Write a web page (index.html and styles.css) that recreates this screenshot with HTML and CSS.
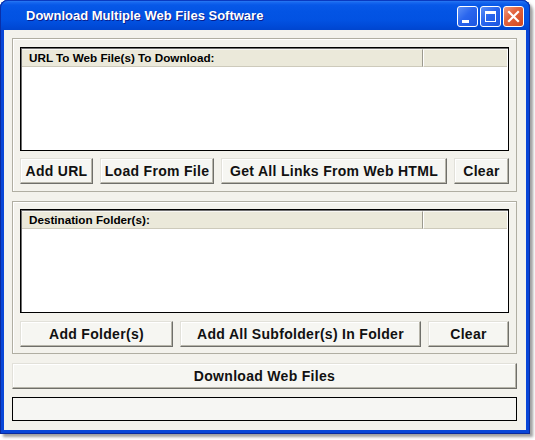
FILE: index.html
```html
<!DOCTYPE html>
<html>
<head>
<meta charset="utf-8">
<link rel="stylesheet" href="styles.css">
</head>
<body>
<div class="window">
  <div class="titlebar">
    <div class="title">Download Multiple Web Files Software</div>
    <div class="caps">
      <div class="cap cap-min"><span class="min-bar"></span></div>
      <div class="cap cap-max"><span class="max-box"></span></div>
      <div class="cap cap-close">
        <svg width="13" height="13" viewBox="0 0 13 13"><path d="M2 2 L11 11 M11 2 L2 11" stroke="#fff" stroke-width="2.2" stroke-linecap="square"/></svg>
      </div>
    </div>
  </div>
  <div class="client">
    <div class="group g1">
      <div class="list">
        <div class="lhead">
          <div class="hcell hfirst">URL To Web File(s) To Download:</div>
          <div class="hcell hrest"></div>
        </div>
        <div class="lbody"></div>
      </div>
      <div class="btnrow">
        <button class="btn w-addurl">Add URL</button>
        <button class="btn w-load">Load From File</button>
        <button class="btn w-links">Get All Links From Web HTML</button>
        <button class="btn w-clear1">Clear</button>
      </div>
    </div>
    <div class="group g2">
      <div class="list">
        <div class="lhead">
          <div class="hcell hfirst">Destination Folder(s):</div>
          <div class="hcell hrest"></div>
        </div>
        <div class="lbody"></div>
      </div>
      <div class="btnrow">
        <button class="btn w-addf">Add Folder(s)</button>
        <button class="btn w-addall">Add All Subfolder(s) In Folder</button>
        <button class="btn w-clear2">Clear</button>
      </div>
    </div>
    <button class="btn download">Download Web Files</button>
    <div class="status"></div>
  </div>
</div>
</body>
</html>
```
FILE: styles.css
```css
html, body {
  margin: 0;
  padding: 0;
  background: #ffffff;
}
body {
  width: 535px;
  height: 440px;
  overflow: hidden;
  font-family: "Liberation Sans", Arial, sans-serif;
}
.window {
  width: 530px;
  height: 434px;
  box-sizing: border-box;
  display: flex;
  flex-direction: column;
  background: #0846D8;
  border-radius: 8px 8px 0 0;
  box-shadow: inset 0 0 0 1px #0A2A9E, 3px 3px 3px rgba(0, 0, 0, 0.38);
}
.titlebar {
  height: 30px;
  flex: none;
  display: flex;
  align-items: center;
  padding: 0 6px 0 26px;
  box-sizing: border-box;
  border-radius: 8px 8px 0 0;
  background: linear-gradient(to bottom, #3C8EF8 0px, #1A6AF0 2px, #0758E8 5px, #0354E4 12px, #0252E2 20px, #0049D6 27px, #0045CE 30px);
  box-shadow: inset 1px 0 #0A2FA8, inset -1px 0 #0A2FA8, inset 0 1px #0A3AC0;
}
.title {
  flex: 1;
  color: #ffffff;
  font-weight: bold;
  font-size: 13px;
  text-shadow: 1px 1px 0 #0A1E8C;
  padding-top: 1px;
}
.caps {
  display: flex;
  gap: 2px;
  padding-top: 2px;
}
.cap {
  width: 21px;
  height: 21px;
  box-sizing: border-box;
  border: 1px solid #ffffff;
  border-radius: 3px;
  position: relative;
}
.cap-min, .cap-max {
  background: linear-gradient(135deg, #5C8FF6 0%, #2A66EE 45%, #1C55E0 100%);
}
.cap-close {
  background: linear-gradient(135deg, #F09A80 0%, #E2643F 40%, #D2461E 100%);
  display: flex;
  align-items: center;
  justify-content: center;
}
.min-bar {
  position: absolute;
  left: 4px;
  top: 13px;
  width: 7px;
  height: 3px;
  background: #ffffff;
}
.max-box {
  position: absolute;
  left: 4px;
  top: 4px;
  width: 11px;
  height: 11px;
  box-sizing: border-box;
  border: 1px solid #ffffff;
  border-top-width: 3px;
}
.client {
  flex: 1;
  margin: 0 4px 4px 4px;
  background: #F3F2EC;
  padding: 8px 9px 0 8px;
  box-sizing: border-box;
  display: flex;
  flex-direction: column;
}
.group {
  box-sizing: border-box;
  border: 1px solid #B0AEA2;
  box-shadow: inset 1px 1px #ffffff;
  display: flex;
  flex-direction: column;
}
.g1 {
  height: 154px;
  padding: 8px 7px 7px 7px;
  gap: 7px;
}
.g2 {
  height: 153px;
  margin-top: 9px;
  padding: 7px 7px 6px 7px;
  gap: 8px;
}
.list {
  height: 104px;
  box-sizing: border-box;
  border: 1px solid #000000;
  box-shadow: inset 1px 1px #6E6E6E;
  background: #ffffff;
  display: flex;
  flex-direction: column;
  padding: 1px 0 0 1px;
}
.lhead {
  height: 18px;
  display: flex;
  flex: none;
}
.hcell {
  box-sizing: border-box;
  height: 18px;
  background: #EBE9DA;
  border-top: 1px solid #F8F7F2;
  border-bottom: 1px solid #CDCABB;
  font-size: 11.7px;
  font-weight: bold;
  color: #000000;
  line-height: 16px;
}
.hfirst {
  width: 401px;
  padding-left: 7px;
  border-right: 1px solid #9C9A8E;
}
.hrest {
  flex: 1;
  border-left: 1px solid #ffffff;
  margin-right: 1px;
}
.lbody {
  flex: 1;
}
.btnrow {
  display: flex;
  gap: 7px;
  height: 26px;
}
.btn {
  height: 26px;
  box-sizing: border-box;
  margin: 0;
  padding: 0;
  font-family: "Liberation Sans", Arial, sans-serif;
  font-size: 14px;
  font-weight: bold;
  letter-spacing: 0.3px;
  color: #111111;
  background: #F6F6F2;
  border: 1px solid;
  border-color: #E2E1DA #6F6F6A #6F6F6A #E2E1DA;
  box-shadow: inset -1px -1px #B7B5AA, inset 1px 1px #ffffff;
  text-align: center;
}
.w-addurl { width: 73px; }
.w-load { width: 114px; }
.w-links { width: 226px; }
.w-clear1 { width: 55px; }
.w-addf { width: 153px; }
.w-addall { width: 241px; }
.w-clear2 { width: 81px; }
.download {
  width: 505px;
  margin-top: 9px;
  flex: none;
}
.status {
  width: 505px;
  height: 24px;
  margin-top: 8px;
  box-sizing: border-box;
  border: 1px solid #000000;
  background: #F6F6F3;
  flex: none;
}
```
